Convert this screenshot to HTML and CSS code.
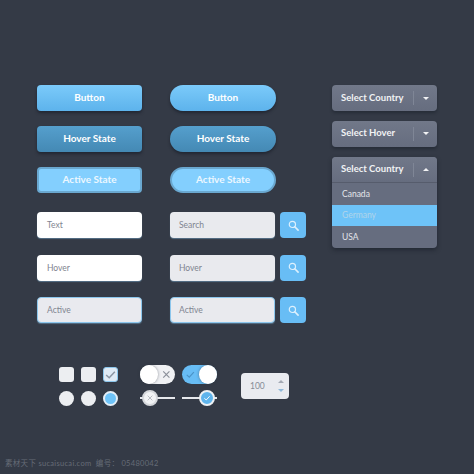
FILE: index.html
```html
<!DOCTYPE html>
<html lang="en">
<head>
    <meta charset="UTF-8">
    <title>UI Kit</title>
    <link rel="stylesheet" href="styles.css">
</head>
<body>
    <svg class="defs" width="0" height="0">
        <symbol id="search" viewBox="0 0 12 12">
            <circle cx="4.8" cy="4.8" r="3.4" fill="none" stroke="currentColor" stroke-width="1.3"/>
            <path d="M7.4 7.4L11 11" fill="none" stroke="currentColor" stroke-width="1.8" stroke-linecap="round"/>
        </symbol>
        <symbol id="check" viewBox="0 0 12 12">
            <path d="M2 6.4L4.8 9L10 3.4" fill="none" stroke="currentColor" stroke-width="1.4"/>
        </symbol>
        <symbol id="cross" viewBox="0 0 12 12">
            <path d="M2.5 2.5L9.5 9.5M9.5 2.5L2.5 9.5" fill="none" stroke="currentColor" stroke-width="1.3"/>
        </symbol>
    </svg>

    <div class="kit">
        <div class="top">
            <div class="col">
                <div class="btn">Button</div>
                <div class="btn hover">Hover State</div>
                <div class="btn active">Active State</div>
                <div class="fields">
                    <div class="field">Text</div>
                    <div class="field">Hover</div>
                    <div class="field field-active">Active</div>
                </div>
            </div>

            <div class="col">
                <div class="btn pill">Button</div>
                <div class="btn pill hover">Hover State</div>
                <div class="btn pill active">Active State</div>
                <div class="fields">
                    <div class="search-row">
                        <div class="field grey">Search</div>
                        <div class="search-btn"><svg><use href="#search"/></svg></div>
                    </div>
                    <div class="search-row">
                        <div class="field grey">Hover</div>
                        <div class="search-btn"><svg><use href="#search"/></svg></div>
                    </div>
                    <div class="search-row">
                        <div class="field grey grey-active">Active</div>
                        <div class="search-btn"><svg><use href="#search"/></svg></div>
                    </div>
                </div>
            </div>

            <div class="col col-select">
                <div class="select">
                    <span class="select-label">Select Country</span>
                    <span class="select-arrow"><i class="tri"></i></span>
                </div>
                <div class="select">
                    <span class="select-label">Select Hover</span>
                    <span class="select-arrow"><i class="tri"></i></span>
                </div>
                <div class="dropdown">
                    <div class="select open">
                        <span class="select-label">Select Country</span>
                        <span class="select-arrow"><i class="tri up"></i></span>
                    </div>
                    <div class="option">Canada</div>
                    <div class="option selected">Germany</div>
                    <div class="option last">USA</div>
                </div>
            </div>
        </div>

        <div class="bottom">
            <div class="checks">
                <span class="box"></span>
                <span class="box"></span>
                <span class="box on"><svg><use href="#check"/></svg></span>
                <span class="radio"></span>
                <span class="radio"></span>
                <span class="radio on"></span>
            </div>

            <div class="toggles">
                <div class="toggle">
                    <span class="knob"></span>
                    <svg class="toggle-icon"><use href="#cross"/></svg>
                </div>
                <div class="toggle on">
                    <svg class="toggle-icon"><use href="#check"/></svg>
                    <span class="knob"></span>
                </div>
                <div class="slider">
                    <span class="thumb"><svg><use href="#cross"/></svg></span>
                </div>
                <div class="slider on">
                    <span class="thumb"><svg><use href="#check"/></svg></span>
                </div>
            </div>

            <div class="stepper">
                <span class="stepper-val">100</span>
                <span class="stepper-arrows">
                    <i class="tri up small"></i>
                    <i class="tri small"></i>
                </span>
            </div>
        </div>

        <div class="mark">素材天下 sucaisucai.com &nbsp;编号： 05480042</div>
    </div>
</body>
</html>
```

FILE: styles.css
```css
* {
    margin: 0;
    padding: 0;
    box-sizing: border-box;
}

body {
    background-color: #343a46;
    font-family: 'Lato', 'Noto Sans CJK SC', sans-serif;
    width: 474px;
    height: 474px;
    overflow: hidden;
}

.defs {
    display: block;
}

.kit {
    padding: 85px 0 0 37px;
}

.top {
    display: flex;
    align-items: flex-start;
}

.col {
    display: flex;
    flex-direction: column;
    gap: 15px;
    width: 105px;
    margin-right: 28px;
}

.col:nth-child(2) {
    width: 136px;
    margin-right: 26px;
}

/* Buttons */
.btn {
    height: 26px;
    line-height: 25px;
    text-align: center;
    font-size: 10px;
    font-weight: 700;
    color: #fff;
    border-radius: 4px;
    background: linear-gradient(#7bcafa, #5db3ec);
    box-shadow: 0 2px 3px rgba(18, 24, 34, 0.55);
}

.btn.pill {
    width: 106px;
    border-radius: 13px;
}

.btn.hover {
    background: linear-gradient(#559fcd, #4489b4);
}

.btn.active {
    background: #83cffe;
    border: 2px solid #6aa8d0;
    line-height: 21px;
    color: #ecf7ff;
    box-shadow: none;
}

/* Text fields */
.fields {
    display: flex;
    flex-direction: column;
    gap: 16.5px;
    margin-top: 4px;
}

.field {
    height: 26px;
    line-height: 26px;
    padding-left: 10px;
    font-size: 8.5px;
    color: #7f8490;
    background-color: #fff;
    border-radius: 4px;
    box-shadow: 0 1px 1px rgba(120, 170, 205, 0.5);
}

.field-active {
    background-color: #e9eaef;
    border: 1px solid #8cc6ec;
    line-height: 24px;
    padding-left: 9px;
}

.field.grey {
    width: 105px;
    background-color: #e9eaee;
    padding-left: 9px;
}

.field.grey-active {
    border: 1px solid #8cc6ec;
    line-height: 24px;
    padding-left: 8px;
}

.search-row {
    display: flex;
    gap: 5px;
}

.search-btn {
    width: 26px;
    height: 26px;
    border-radius: 4px;
    background-color: #68bdf5;
    color: #dcf0fd;
    display: flex;
    align-items: center;
    justify-content: center;
}

.search-btn svg {
    width: 11px;
    height: 11px;
}

/* Selects */
.col-select {
    gap: 9.5px;
    margin-right: 0;
}

.select {
    height: 26px;
    display: flex;
    align-items: center;
    justify-content: space-between;
    border-radius: 4px;
    background: linear-gradient(#717889, #666d7f);
    box-shadow: 0 2px 3px rgba(18, 24, 34, 0.4);
    color: #f1f2f4;
    font-size: 9.5px;
    font-weight: 700;
}

.select-label {
    padding: 0 0 2px 9px;
}

.select-arrow {
    width: 24px;
    height: 14px;
    border-left: 1px solid #7f8696;
    display: flex;
    align-items: center;
    justify-content: center;
}

.tri {
    display: block;
    width: 0;
    height: 0;
    border-left: 3px solid transparent;
    border-right: 3px solid transparent;
    border-top: 3px solid #f1f2f4;
}

.tri.up {
    border-top: 0;
    border-bottom: 3px solid #f1f2f4;
}

.dropdown {
    margin-top: 1px;
    border-radius: 4px;
    background-color: #666d7f;
    box-shadow: 0 2px 4px rgba(18, 24, 34, 0.5);
}

.select.open {
    border-radius: 4px 4px 0 0;
    border-bottom: 1px solid #565c6c;
    box-shadow: none;
}

.option {
    height: 22px;
    line-height: 22px;
    padding-left: 10px;
    font-size: 8.5px;
    color: #e4e6ea;
}

.option.selected {
    height: 21px;
    line-height: 21px;
    background-color: #6ec3f8;
    color: #b0d4ea;
}

.option.last {
    border-radius: 0 0 4px 4px;
}

/* Checks, toggles and stepper */
.bottom {
    display: flex;
    align-items: flex-start;
    margin-top: 42px;
    padding-left: 22px;
}

.checks {
    display: grid;
    grid-template-columns: repeat(3, 15px);
    gap: 9px 7px;
    margin-top: 2px;
}

.box,
.radio {
    display: block;
    width: 15px;
    height: 15px;
    background-color: #eceef1;
    border-radius: 3px;
}

.radio {
    border-radius: 50%;
}

.box.on {
    background-color: #dfeaf5;
    border: 1px solid #8cc6ec;
    color: #8b95a3;
}

.box.on svg {
    display: block;
    width: 13px;
    height: 13px;
}

.radio.on {
    background-color: #6ec3f8;
    border: 2px solid #e3eef7;
}

.toggles {
    display: grid;
    grid-template-columns: 35px 35px;
    column-gap: 7px;
    row-gap: 6px;
    margin-left: 22px;
}

.toggle {
    height: 19px;
    border-radius: 10px;
    background-color: #f0f1f4;
    display: flex;
    align-items: center;
    justify-content: space-between;
    color: #8a8f99;
}

.toggle.on {
    background-color: #68bdf5;
    color: #4b94c8;
}

.knob {
    width: 19px;
    height: 19px;
    border-radius: 50%;
    background-color: #fff;
    box-shadow: 0 0 3px rgba(40, 48, 60, 0.5);
}

.toggle-icon {
    width: 11px;
    height: 11px;
    margin: 0 3px;
}

.slider {
    height: 16px;
    display: flex;
    align-items: center;
    position: relative;
}

.slider::before {
    content: "";
    display: block;
    width: 100%;
    height: 2px;
    background-color: #e6e8ec;
}

.thumb {
    position: absolute;
    top: 0;
    left: 2px;
    width: 16px;
    height: 16px;
    border-radius: 50%;
    border: 2px solid #d6d8dc;
    background-color: #f2f3f5;
    color: #b0b4bb;
    display: flex;
    align-items: center;
    justify-content: center;
}

.thumb svg {
    display: block;
    width: 8px;
    height: 8px;
}

.slider.on .thumb {
    left: 17px;
    border-color: #eef1f4;
    background-color: #5fb4ec;
    color: #fff;
}

.stepper {
    width: 48px;
    height: 26px;
    margin: 8px 0 0 24px;
    border-radius: 4px;
    background-color: #e9ebf0;
    display: flex;
    align-items: center;
    justify-content: space-between;
    padding: 0 5px 0 9px;
    font-size: 8.5px;
    color: #868b96;
}

.stepper-arrows {
    display: flex;
    flex-direction: column;
    gap: 6px;
}

.tri.small {
    border-top-color: #8fb9da;
}

.tri.up.small {
    border-bottom-color: #a3a9b4;
}

.mark {
    margin: 51px 0 0 -32px;
    font-size: 7.5px;
    letter-spacing: 0.3px;
    color: #666c77;
}
```
